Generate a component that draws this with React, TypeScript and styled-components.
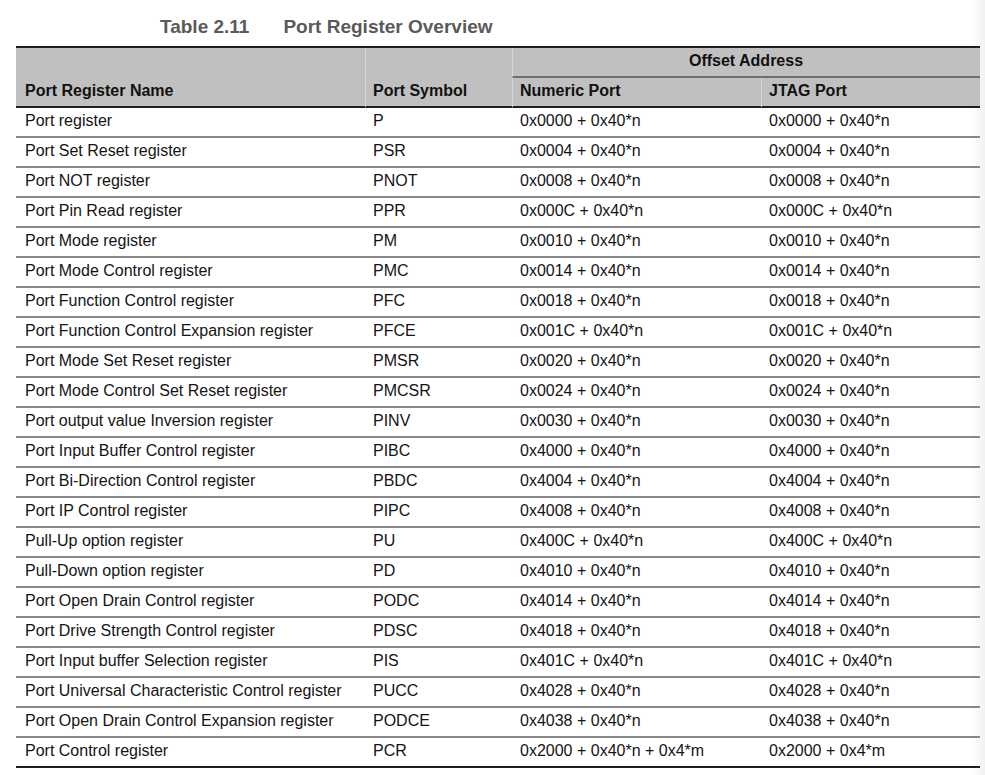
import React from "react";
import styled, { createGlobalStyle } from "styled-components";

const GlobalStyle = createGlobalStyle`
  html, body {
    margin: 0;
    padding: 0;
    background: linear-gradient(to right, #ffffff 0, #ffffff 972px, #f1f1f1 985px);
    min-height: 100%;
  }
  body {
    font-family: "Liberation Sans", Arial, sans-serif;
    color: #141414;
  }
`;

const Page = styled.div`
  padding: 16px 5px 0 16px;
  width: 964px;
`;

const Caption = styled.div`
  display: flex;
  gap: 34px;
  padding-left: 144px;
  margin-bottom: 8px;
  font-size: 19px;
  line-height: 22px;
  font-weight: bold;
  color: #5a5a5a;
`;

const Table = styled.table`
  width: 964px;
  table-layout: fixed;
  border-collapse: separate;
  border-spacing: 0;
  border-top: 2px solid #1e1e1e;
  font-size: 16px;
`;

const Head = styled.th<{ $divider?: boolean; $center?: boolean; $under?: "thin" | "thick" }>`
  background: #c0c0c0;
  font-weight: bold;
  color: #111;
  height: 26px;
  line-height: 26px;
  padding: 0 8px 2px ${(p) => (p.$divider ? "7px" : "9px")};
  text-align: ${(p) => (p.$center ? "center" : "left")};
  vertical-align: bottom;
  white-space: nowrap;
  border-left: ${(p) => (p.$divider ? "1px solid #d6d6d6" : "none")};
  border-bottom: ${(p) =>
    p.$under === "thin" ? "2px solid #6e6e6e" : p.$under === "thick" ? "2px solid #1e1e1e" : "none"};
`;

const Cell = styled.td<{ $first?: boolean; $last?: boolean }>`
  height: 26px;
  line-height: 26px;
  padding: 0 8px 2px ${(p) => (p.$first ? "9px" : "8px")};
  white-space: nowrap;
  border-bottom: ${(p) => (p.$last ? "2px solid #1e1e1e" : "2px solid #888888")};
`;

type Row = [string, string, string, string];

const rows: Row[] = [
  ["Port register", "P", "0x0000 + 0x40*n", "0x0000 + 0x40*n"],
  ["Port Set Reset register", "PSR", "0x0004 + 0x40*n", "0x0004 + 0x40*n"],
  ["Port NOT register", "PNOT", "0x0008 + 0x40*n", "0x0008 + 0x40*n"],
  ["Port Pin Read register", "PPR", "0x000C + 0x40*n", "0x000C + 0x40*n"],
  ["Port Mode register", "PM", "0x0010 + 0x40*n", "0x0010 + 0x40*n"],
  ["Port Mode Control register", "PMC", "0x0014 + 0x40*n", "0x0014 + 0x40*n"],
  ["Port Function Control register", "PFC", "0x0018 + 0x40*n", "0x0018 + 0x40*n"],
  ["Port Function Control Expansion register", "PFCE", "0x001C + 0x40*n", "0x001C + 0x40*n"],
  ["Port Mode Set Reset register", "PMSR", "0x0020 + 0x40*n", "0x0020 + 0x40*n"],
  ["Port Mode Control Set Reset register", "PMCSR", "0x0024 + 0x40*n", "0x0024 + 0x40*n"],
  ["Port output value Inversion register", "PINV", "0x0030 + 0x40*n", "0x0030 + 0x40*n"],
  ["Port Input Buffer Control register", "PIBC", "0x4000 + 0x40*n", "0x4000 + 0x40*n"],
  ["Port Bi-Direction Control register", "PBDC", "0x4004 + 0x40*n", "0x4004 + 0x40*n"],
  ["Port IP Control register", "PIPC", "0x4008 + 0x40*n", "0x4008 + 0x40*n"],
  ["Pull-Up option register", "PU", "0x400C + 0x40*n", "0x400C + 0x40*n"],
  ["Pull-Down option register", "PD", "0x4010 + 0x40*n", "0x4010 + 0x40*n"],
  ["Port Open Drain Control register", "PODC", "0x4014 + 0x40*n", "0x4014 + 0x40*n"],
  ["Port Drive Strength Control register", "PDSC", "0x4018 + 0x40*n", "0x4018 + 0x40*n"],
  ["Port Input buffer Selection register", "PIS", "0x401C + 0x40*n", "0x401C + 0x40*n"],
  ["Port Universal Characteristic Control register", "PUCC", "0x4028 + 0x40*n", "0x4028 + 0x40*n"],
  ["Port Open Drain Control Expansion register", "PODCE", "0x4038 + 0x40*n", "0x4038 + 0x40*n"],
  ["Port Control register", "PCR", "0x2000 + 0x40*n + 0x4*m", "0x2000 + 0x4*m"],
];

export default function App() {
  return (
    <Page>
      <GlobalStyle />
      <Caption>
        <span>Table 2.11</span>
        <span>Port Register Overview</span>
      </Caption>
      <Table>
        <colgroup>
          <col style={{ width: 349 }} />
          <col style={{ width: 147 }} />
          <col style={{ width: 249 }} />
          <col style={{ width: 219 }} />
        </colgroup>
        <thead>
          <tr>
            <Head rowSpan={2} $under="thick">Port Register Name</Head>
            <Head rowSpan={2} $divider $under="thick">Port Symbol</Head>
            <Head colSpan={2} $divider $center $under="thin">Offset Address</Head>
          </tr>
          <tr>
            <Head $divider $under="thick">Numeric Port</Head>
            <Head $divider $under="thick">JTAG Port</Head>
          </tr>
        </thead>
        <tbody>
          {rows.map((r, i) => (
            <tr key={r[1]}>
              {r.map((v, j) => (
                <Cell key={j} $first={j === 0} $last={i === rows.length - 1}>{v}</Cell>
              ))}
            </tr>
          ))}
        </tbody>
      </Table>
    </Page>
  );
}
